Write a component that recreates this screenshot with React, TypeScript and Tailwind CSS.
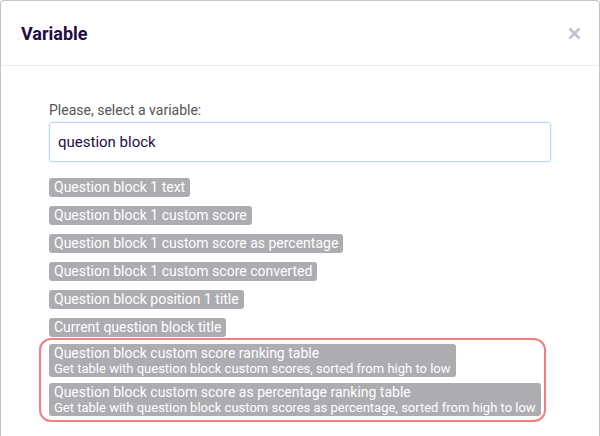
import React from "react";

const simple = [
  "Question block 1 text",
  "Question block 1 custom score",
  "Question block 1 custom score as percentage",
  "Question block 1 custom score converted",
  "Question block position 1 title",
  "Current question block title",
];

const ranked = [
  {
    title: "Question block custom score ranking table",
    desc: "Get table with question block custom scores, sorted from high to low",
  },
  {
    title: "Question block custom score as percentage ranking table",
    desc: "Get table with question block custom scores as percentage, sorted from high to low",
  },
];

export default function App() {
  return (
    <div className="h-[436px] w-[600px] overflow-hidden rounded-t-[4px] border border-b-0 border-[#c4c4c4] bg-white font-['Roboto',sans-serif]">
      {/* Header */}
      <div className="flex h-[65px] items-center justify-between border-b border-[#ececec] pl-5 pr-[17px]">
        <h2 className="text-[18px] font-bold text-[#230a44]">Variable</h2>
        <svg width="13" height="13" viewBox="0 0 13 13" className="mr-[1px]">
          <path d="M1.5 1.5 L11.5 11.5 M11.5 1.5 L1.5 11.5" stroke="#c4bfd0" strokeWidth="2.6" strokeLinecap="butt" />
        </svg>
      </div>

      {/* Body */}
      <div className="px-12 pt-[34px]">
        <label className="block text-[14px] leading-5 text-[#555555]">Please, select a variable:</label>
        <div className="mt-[2px] flex h-[40px] items-center rounded-[3px] border border-[#bcd6f3] px-2 text-[15px] text-[#250d47] shadow-[0_0_2px_rgba(120,170,230,0.35)]">
          question block
        </div>

        <div className="mt-4 flex flex-col items-start gap-[9px]">
          {simple.map((s) => (
            <span key={s} className="h-[19px] rounded-[3px] bg-[#adacb1] px-[5px] text-[14px] leading-[19px] text-white">
              {s}
            </span>
          ))}
        </div>

        {/* highlighted ranking tables */}
        <div className="-ml-[10px] mt-[1px] flex w-fit flex-col items-start gap-[6px] rounded-[12px] border-2 border-[#f37e7e] pb-[4px] pl-[8px] pr-[3px] pt-[4px]">
          {ranked.map((r) => (
            <div key={r.title} className="rounded-[3px] bg-[#adacb1] px-[5px] py-[1px] text-white">
              <div className="text-[14px] leading-[16px]">{r.title}</div>
              <div className="text-[13px] leading-[15px]">{r.desc}</div>
            </div>
          ))}
        </div>
      </div>
    </div>
  );
}
